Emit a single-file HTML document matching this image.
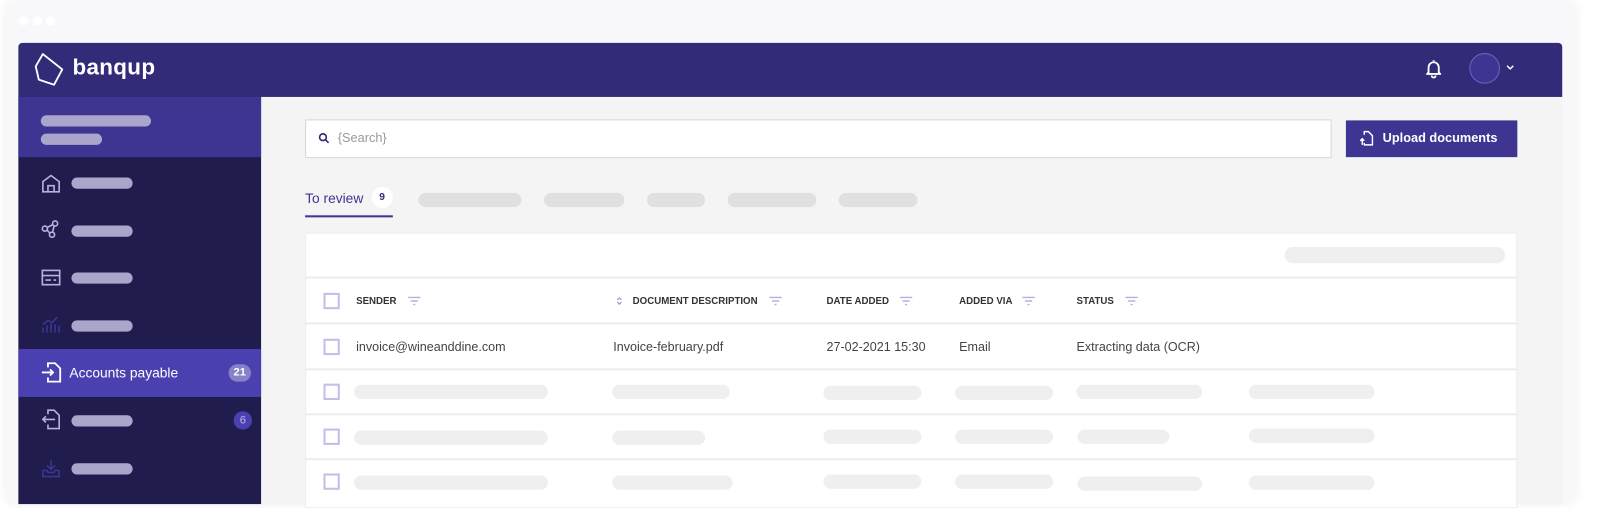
<!DOCTYPE html>
<html><head><meta charset="utf-8"><style>
*{box-sizing:border-box;margin:0;padding:0}
body{width:1600px;height:494px;background:#fff;position:relative;overflow:hidden;font-family:"Liberation Sans",sans-serif}
#w{position:absolute;left:0;top:0;width:1568px;height:484px;transform:scale(1.0204);transform-origin:0 0}
.a{position:absolute}
.sk{position:absolute;border-radius:8px;background:#efefef;height:14px}
.ss{position:absolute;border-radius:6px;background:#aaa6cb;height:11px}
.cb{position:absolute;width:16px;height:16px;border:2px solid #c3bde8;left:317px}
.th{position:absolute;font-size:9.5px;font-weight:bold;color:#333;top:290px}
.td{position:absolute;font-size:12.3px;color:#444;top:333px}
.fl{position:absolute;top:290px}
.ln{position:absolute;left:299px;width:1188px;height:2px;background:#ececec}
</style></head><body><div id="w">
<div class="a" style="left:5px;top:0;width:1540px;height:494px;background:#f8f8fa;border-radius:12px;box-shadow:0 0 10px rgba(0,0,0,.06)"></div>
<div class="a" style="left:19px;top:16px;width:9px;height:9px;border-radius:50%;background:#fff"></div>
<div class="a" style="left:32px;top:16px;width:9px;height:9px;border-radius:50%;background:#fff"></div>
<div class="a" style="left:45px;top:16px;width:9px;height:9px;border-radius:50%;background:#fff"></div>
<div class="a" style="left:18px;top:42px;width:1513px;height:53px;background:#322b78;border-radius:4px 4px 0 0"></div>
<svg class="a" style="left:33px;top:51px" width="30" height="34" viewBox="0 0 30 34"><path d="M9 2 L28 17 L20 32 L5 27 L2 14 Z" fill="none" stroke="#fff" stroke-width="1.8" stroke-linejoin="round"/></svg>
<div class="a" style="left:71px;top:53px;color:#fff;font-size:22px;font-weight:bold;letter-spacing:.3px">banqup</div>
<svg class="a" style="left:1396px;top:57px" width="18" height="20" viewBox="0 0 18 20"><path d="M9 2 V3 M4 14 V9 a5 5 0 0 1 10 0 V14 L15.5 15.5 H2.5 Z M7 17 a2 2 0 0 0 4 0" fill="none" stroke="#fff" stroke-width="1.8" stroke-linejoin="round"/></svg>
<div class="a" style="left:1440px;top:52px;width:30px;height:30px;border-radius:50%;background:#3e3592;border:1px solid #6a62c0"></div>
<svg class="a" style="left:1476px;top:63px" width="8" height="6" viewBox="0 0 8 6"><path d="M1 1.5 L4 4.5 L7 1.5" fill="none" stroke="#fff" stroke-width="1.4"/></svg>
<div class="a" style="left:18px;top:95px;width:238px;height:399px;background:#201c4d"></div>
<div class="a" style="left:18px;top:95px;width:238px;height:59px;background:#3e3592"></div>
<div class="ss" style="left:40px;top:113px;width:108px"></div>
<div class="ss" style="left:40px;top:131px;width:60px"></div>
<div class="ss" style="left:70px;top:174px;width:60px"></div>
<div class="ss" style="left:70px;top:221px;width:60px"></div>
<div class="ss" style="left:70px;top:267px;width:60px"></div>
<div class="ss" style="left:70px;top:314px;width:60px"></div>
<div class="ss" style="left:70px;top:407px;width:60px"></div>
<div class="ss" style="left:70px;top:454px;width:60px"></div>
<svg class="a" style="left:40px;top:170px" width="20" height="20" viewBox="0 0 20 20" fill="none" stroke="#b5b0dc" stroke-width="1.6"><path d="M2 8 L10 2 L18 8 V18 H2 Z M7 18 V12 H13 V18"/></svg>
<svg class="a" style="left:40px;top:215px" width="20" height="20" viewBox="0 0 20 20" fill="none" stroke="#b5b0dc" stroke-width="1.6"><circle cx="4" cy="9" r="2.5"/><circle cx="14" cy="4" r="2.5"/><circle cx="11" cy="15" r="2.5"/><path d="M6 8 L12 5 M6 10.5 L9 13.5 M13 6.5 L11.5 12.5"/></svg>
<svg class="a" style="left:40px;top:263px" width="20" height="18" viewBox="0 0 20 18" fill="none" stroke="#b5b0dc" stroke-width="1.6"><rect x="1.5" y="2" width="17" height="14"/><path d="M1.5 7 H18.5 M4.5 11.5 H10 M12.5 11.5 H15"/></svg>
<svg class="a" style="left:40px;top:309px" width="20" height="18" viewBox="0 0 20 18" fill="none" stroke="#3b3590" stroke-width="1.6"><path d="M2 17 V12 M6 17 V10 M10 17 V8 M14 17 V9 M18 17 V10 M2 9 L7 5 L11 7 L16 2"/></svg>
<div class="a" style="left:18px;top:342px;width:238px;height:47px;background:#4b40b0"></div>
<svg class="a" style="left:39px;top:354px" width="22" height="22" viewBox="0 0 22 22" fill="none" stroke="#fff" stroke-width="1.8"><path d="M8 6 V2 H15 L20 7 V20 H8 V16 M2 11 H13 M10 8 L13 11 L10 14"/></svg>
<div class="a" style="left:68px;top:358px;color:#fff;font-size:13.5px">Accounts payable</div>
<div class="a" style="left:224px;top:357px;width:22px;height:17px;border-radius:9px;background:#8781c8;color:#fff;font-size:11px;font-weight:bold;text-align:center;line-height:17px">21</div>
<svg class="a" style="left:40px;top:400px" width="22" height="22" viewBox="0 0 22 22" fill="none" stroke="#b5b0dc" stroke-width="1.6"><path d="M7 6 V2 H13 L18 7 V20 H7 V16 M14 11 H2 M5 8 L2 11 L5 14"/></svg>
<div class="a" style="left:229px;top:403px;width:18px;height:18px;border-radius:50%;background:#4b40b0;color:#bfbaf0;font-size:11px;text-align:center;line-height:18px">6</div>
<svg class="a" style="left:40px;top:449px" width="20" height="20" viewBox="0 0 20 20" fill="none" stroke="#3b3590" stroke-width="1.6"><path d="M10 2 V11 M6 7 L10 11 L14 7 M2 12 V18 H18 V12 M2 12 H6 L7 14 H13 L14 12 H18"/></svg>
<div class="a" style="left:256px;top:95px;width:1275px;height:399px;background:#f4f4f4"></div>
<div class="a" style="left:299px;top:117px;width:1006px;height:38px;background:#fff;border:1.5px solid #d6d6d6"></div>
<svg class="a" style="left:312px;top:130px" width="11" height="11" viewBox="0 0 11 11" fill="none" stroke="#322b78" stroke-width="1.6"><circle cx="4.5" cy="4.5" r="3.3"/><path d="M7 7 L10 10"/></svg>
<div class="a" style="left:331px;top:128px;color:#999;font-size:12.5px">{Search}</div>
<div class="a" style="left:1319px;top:118px;width:168px;height:36px;background:#3e3592"></div>
<svg class="a" style="left:1332px;top:127px" width="14" height="17" viewBox="0 0 14 17" fill="none" stroke="#fff" stroke-width="1.4"><path d="M5 5 V2 H9 L13 6 V15 H5 V13 M3 15 V9 M1 11 L3 9 L5 11"/></svg>
<div class="a" style="left:1355px;top:128px;color:#fff;font-size:12.5px;font-weight:bold">Upload documents</div>
<div class="a" style="left:299px;top:187px;color:#3e3592;font-size:13.5px">To review</div>
<div class="a" style="left:364px;top:183px;width:21px;height:21px;border-radius:50%;background:#fff;color:#322b78;font-size:10px;font-weight:bold;text-align:center;line-height:21px">9</div>
<div class="a" style="left:299px;top:211px;width:86px;height:2px;background:#3e3592"></div>
<div class="sk" style="left:410px;top:189px;width:101px;background:#e0e0e0"></div>
<div class="sk" style="left:533px;top:189px;width:79px;background:#e0e0e0"></div>
<div class="sk" style="left:634px;top:189px;width:57px;background:#e0e0e0"></div>
<div class="sk" style="left:713px;top:189px;width:87px;background:#e0e0e0"></div>
<div class="sk" style="left:822px;top:189px;width:77px;background:#e0e0e0"></div>
<div class="a" style="left:299px;top:228px;width:1188px;height:270px;background:#fff;border:1px solid #ececec"></div>
<div class="sk" style="left:1259px;top:242px;width:216px;height:16px"></div>
<div class="ln" style="top:271px"></div>
<div class="ln" style="top:316px"></div>
<div class="ln" style="top:361px"></div>
<div class="ln" style="top:405px"></div>
<div class="ln" style="top:449px"></div>
<div class="cb" style="top:287px"></div>
<div class="cb" style="top:332px"></div>
<div class="cb" style="top:376px"></div>
<div class="cb" style="top:420px"></div>
<div class="cb" style="top:464px"></div>
<div class="th" style="left:349px">SENDER</div>
<svg class="a" style="left:604px;top:290px" width="6" height="10" viewBox="0 0 6 10" fill="none" stroke="#9b94d8" stroke-width="1.2"><path d="M1 4 L3 2 L5 4 M1 6 L3 8 L5 6"/></svg>
<div class="th" style="left:620px">DOCUMENT DESCRIPTION</div>
<div class="th" style="left:810px">DATE ADDED</div>
<div class="th" style="left:940px">ADDED VIA</div>
<div class="th" style="left:1055px">STATUS</div>
<svg class="fl" style="left:399px" width="14" height="10" viewBox="0 0 14 10" stroke="#b5aee6" stroke-width="1.4"><path d="M1 1.5H13M3.5 5H10.5M6 8.5H8"/></svg>
<svg class="fl" style="left:753px" width="14" height="10" viewBox="0 0 14 10" stroke="#b5aee6" stroke-width="1.4"><path d="M1 1.5H13M3.5 5H10.5M6 8.5H8"/></svg>
<svg class="fl" style="left:881px" width="14" height="10" viewBox="0 0 14 10" stroke="#b5aee6" stroke-width="1.4"><path d="M1 1.5H13M3.5 5H10.5M6 8.5H8"/></svg>
<svg class="fl" style="left:1001px" width="14" height="10" viewBox="0 0 14 10" stroke="#b5aee6" stroke-width="1.4"><path d="M1 1.5H13M3.5 5H10.5M6 8.5H8"/></svg>
<svg class="fl" style="left:1102px" width="14" height="10" viewBox="0 0 14 10" stroke="#b5aee6" stroke-width="1.4"><path d="M1 1.5H13M3.5 5H10.5M6 8.5H8"/></svg>
<div class="td" style="left:349px">invoice@wineanddine.com</div>
<div class="td" style="left:601px">Invoice-february.pdf</div>
<div class="td" style="left:810px">27-02-2021 15:30</div>
<div class="td" style="left:940px">Email</div>
<div class="td" style="left:1055px">Extracting data (OCR)</div>
<div class="sk" style="left:347px;top:377px;width:190px"></div><div class="sk" style="left:600px;top:377px;width:115px"></div><div class="sk" style="left:807px;top:378px;width:96px"></div><div class="sk" style="left:936px;top:378px;width:96px"></div><div class="sk" style="left:1055px;top:377px;width:123px"></div><div class="sk" style="left:1224px;top:377px;width:123px"></div>
<div class="sk" style="left:347px;top:422px;width:190px"></div><div class="sk" style="left:600px;top:422px;width:91px"></div><div class="sk" style="left:807px;top:421px;width:96px"></div><div class="sk" style="left:936px;top:421px;width:96px"></div><div class="sk" style="left:1056px;top:421px;width:90px"></div><div class="sk" style="left:1224px;top:420px;width:123px"></div>
<div class="sk" style="left:347px;top:466px;width:190px"></div><div class="sk" style="left:600px;top:466px;width:118px"></div><div class="sk" style="left:807px;top:465px;width:96px"></div><div class="sk" style="left:936px;top:465px;width:96px"></div><div class="sk" style="left:1056px;top:467px;width:122px"></div><div class="sk" style="left:1224px;top:466px;width:123px"></div>
</div></body></html>
